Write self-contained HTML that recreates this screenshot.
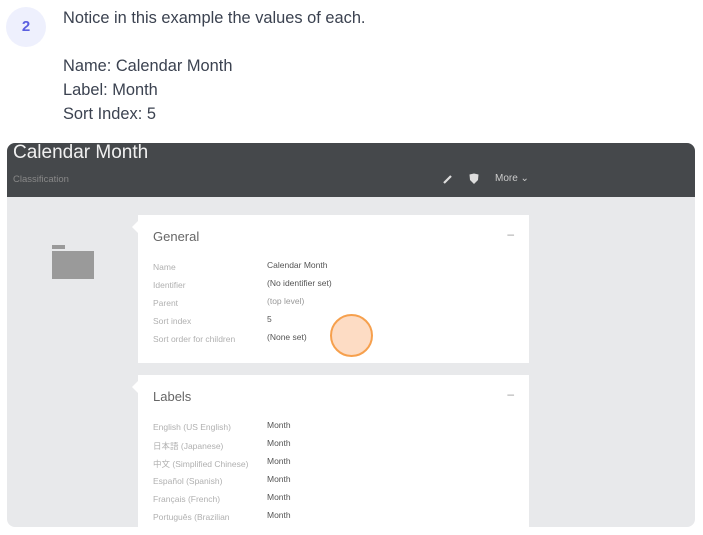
<!DOCTYPE html>
<html><head><style>
*{margin:0;padding:0;box-sizing:border-box}
body{width:703px;height:535px;background:#fff;font-family:"Liberation Sans","Noto Sans CJK JP",sans-serif;position:relative;overflow:hidden}
.a{position:absolute}
.t{color:#3b4250;font-size:16.4px;left:63px;white-space:nowrap}
.panel{left:7px;top:143px;width:688px;height:384px;background:#e8e9eb;border-radius:8px;overflow:hidden}
.hdr{left:0;top:0;width:688px;height:54px;background:#45484b}
.card{background:#fff;left:131px;width:391px}
.card:before{content:"";position:absolute;left:-6px;top:6px;border:6px solid transparent;border-left:0;border-right-color:#fff}
.ct{left:15px;font-size:13px;color:#666}
.min{right:15px;font-size:12px;color:#999}
.l{left:15px;font-size:8.5px;color:#b0b0b0;white-space:nowrap}
.v{left:129px;font-size:8.5px;color:#555;white-space:nowrap}
</style></head><body>
<div class="a" style="left:6px;top:7px;width:40px;height:40px;border-radius:50%;background:#eef0fd;color:#5b5fe0;font-weight:bold;font-size:15px;text-align:center;line-height:40px">2</div>
<div class="a t" style="top:9px">Notice in this example the values of each.</div>
<div class="a t" style="top:57px">Name: Calendar Month</div>
<div class="a t" style="top:81px">Label: Month</div>
<div class="a t" style="top:105px">Sort Index: 5</div>
<div class="a panel">
 <div class="a hdr">
  <div class="a" style="left:6px;top:-1px;font-size:19px;color:#f0f0f0;font-weight:300">Calendar Month</div>
  <div class="a" style="left:6px;top:31px;font-size:9.5px;color:#888">Classification</div>
  <svg class="a" style="left:435px;top:30px" width="12" height="12"><path d="M2 10 L9 3" stroke="#ddd" stroke-width="2.2"/></svg>
  <svg class="a" style="left:461px;top:30px" width="12" height="12"><path d="M1.5 1.5 L6 0.5 L10.5 1.5 L10 7 L6 11 L2 7Z" fill="#ddd"/></svg>
  <div class="a" style="left:488px;top:30px;font-size:10px;color:#ccc">More ⌄</div>
 </div>
 <div class="a" style="left:45px;top:102px;width:13px;height:4px;background:#9a9a9a"></div>
 <div class="a" style="left:45px;top:108px;width:42px;height:28px;background:#9a9a9a"></div>
 <div class="a card" style="top:72px;height:148px">
  <div class="a ct" style="top:14px">General</div><div class="a min" style="top:12px">–</div>
  <div class="a l" style="top:47px">Name</div><div class="a v" style="top:45px">Calendar Month</div>
  <div class="a l" style="top:65px">Identifier</div><div class="a v" style="top:63px">(No identifier set)</div>
  <div class="a l" style="top:83px">Parent</div><div class="a v" style="top:81px;color:#999">(top level)</div>
  <div class="a l" style="top:101px">Sort index</div><div class="a v" style="top:99px">5</div>
  <div class="a l" style="top:119px">Sort order for children</div><div class="a v" style="top:117px">(None set)</div>
 </div>
 <div class="a card" style="top:232px;height:160px">
  <div class="a ct" style="top:14px">Labels</div><div class="a min" style="top:12px">–</div>
  <div class="a l" style="top:47px">English (US English)</div><div class="a v" style="top:45px">Month</div>
  <div class="a l" style="top:65px">日本語 (Japanese)</div><div class="a v" style="top:63px">Month</div>
  <div class="a l" style="top:83px">中文 (Simplified Chinese)</div><div class="a v" style="top:81px">Month</div>
  <div class="a l" style="top:101px">Español (Spanish)</div><div class="a v" style="top:99px">Month</div>
  <div class="a l" style="top:119px">Français (French)</div><div class="a v" style="top:117px">Month</div>
  <div class="a l" style="top:137px">Português (Brazilian</div><div class="a v" style="top:135px">Month</div>
 </div>
</div>
<div class="a" style="left:330px;top:314px;width:43px;height:43px;border-radius:50%;background:#fddcc4;border:2px solid #f6a04d"></div>
</body></html>
